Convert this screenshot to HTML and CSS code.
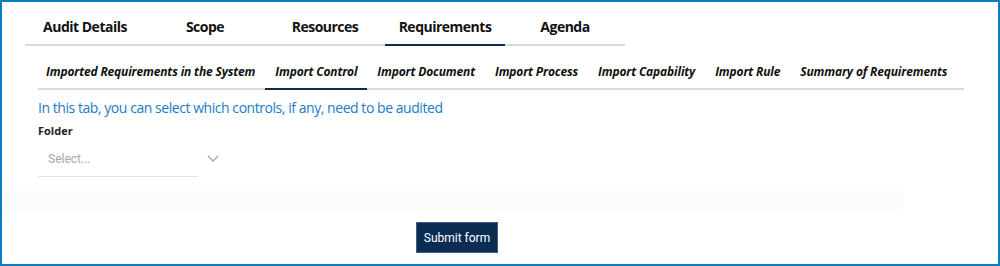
FILE: index.html
```html
<!DOCTYPE html>
<html lang="en">
<head>
    <meta charset="UTF-8">
    <title>Audit - Requirements</title>
    <link rel="stylesheet" href="styles.css">
</head>
<body>
    <div class="frame">
        <div class="main-tabs">
            <div class="main-tab">Audit Details</div>
            <div class="main-tab">Scope</div>
            <div class="main-tab">Resources</div>
            <div class="main-tab active">Requirements</div>
            <div class="main-tab">Agenda</div>
        </div>

        <div class="sub-tabs">
            <div class="sub-tab first">Imported Requirements in the System</div>
            <div class="sub-tab active">Import Control</div>
            <div class="sub-tab">Import Document</div>
            <div class="sub-tab">Import Process</div>
            <div class="sub-tab">Import Capability</div>
            <div class="sub-tab">Import Rule</div>
            <div class="sub-tab">Summary of Requirements</div>
        </div>

        <div class="panel">
            <p class="hint">In this tab, you can select which controls, if any, need to be audited</p>
            <label class="field-label">Folder</label>
            <div class="select-row">
                <div class="select-control">Select...</div>
                <svg class="chevron" width="12" height="7" viewBox="0 0 12 7">
                    <path d="M1 1 L6 6 L11 1" fill="none" stroke="#a8a8a8" stroke-width="1.3"/>
                </svg>
            </div>
            <div class="panel-foot"></div>
        </div>

        <button class="submit-btn">Submit form</button>
    </div>
</body>
</html>
```

FILE: styles.css
```css
:root {
    --frame-blue: #0a7ec4;
    --navy: #0b2d54;
    --line-grey: #d9d9d9;
    --hint-blue: #1a7cc7;
    --text-dark: #111111;
}

body {
    margin: 0;
    font-family: "Open Sans", "Noto Sans", sans-serif;
    color: var(--text-dark);
    background: #ffffff;
}

.frame {
    height: 266px;
    border: 2px solid var(--frame-blue);
    box-sizing: border-box;
    overflow: hidden;
}

/* top level tabs */
.main-tabs {
    display: flex;
    width: 600px;
    margin-left: 23px;
    padding-top: 15px;
    border-bottom: 2px solid var(--line-grey);
}

.main-tab {
    width: 120px;
    text-align: center;
    font-size: 14px;
    font-weight: 700;
    letter-spacing: -0.5px;
    line-height: 20px;
    padding-bottom: 7px;
    margin-bottom: -2px;
    border-bottom: 2px solid transparent;
    white-space: nowrap;
}

.main-tab.active {
    border-bottom-color: var(--navy);
}

/* second level tabs */
.sub-tabs {
    display: flex;
    width: 926px;
    margin: 17px 0 0 36px;
    border-bottom: 2px solid var(--line-grey);
}

.sub-tab {
    flex-shrink: 0;
    white-space: nowrap;
    font-size: 12px;
    font-weight: 700;
    font-style: italic;
    letter-spacing: -0.15px;
    line-height: 18px;
    padding: 0 10px 7px;
    margin-bottom: -2px;
    border-bottom: 2px solid transparent;
}

.sub-tab.first {
    padding-left: 8px;
}

.sub-tab.active {
    border-bottom-color: var(--navy);
}

/* form area */
.panel {
    padding-left: 36px;
}

.hint {
    margin: 8px 0 0;
    font-size: 14px;
    letter-spacing: -0.45px;
    line-height: 20px;
    color: var(--hint-blue);
}

.field-label {
    display: block;
    margin-top: 5px;
    font-size: 11px;
    font-weight: 700;
    line-height: 16px;
    color: #222222;
}

.select-row {
    display: flex;
    align-items: center;
    margin-top: 2px;
}

.select-control {
    width: 150px;
    height: 35px;
    line-height: 37px;
    padding-left: 10px;
    border-bottom: 1px solid #e3e3e3;
    font-family: Roboto, sans-serif;
    font-size: 12px;
    color: #a6a6a6;
}

.chevron {
    margin-left: 9px;
    margin-top: -2px;
}

.panel-foot {
    height: 22px;
    margin: 14px 0 0 -36px;
    width: 901px;
    background: #fbfcfc;
}

.submit-btn {
    display: block;
    margin: 9px 0 0 414px;
    width: 82px;
    height: 31px;
    padding: 0;
    background: var(--navy);
    border: 1px solid #3d5f86;
    color: #ffffff;
    font-family: Roboto, sans-serif;
    font-size: 12px;
    cursor: pointer;
}
```
